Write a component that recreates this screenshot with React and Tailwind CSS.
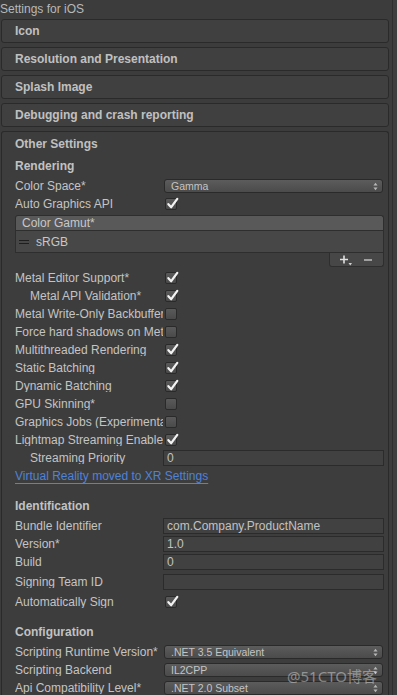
import React from "react";

const font = { fontFamily: '"Liberation Sans", Arial, sans-serif' };

function Check({ on }) {
  return (
    <div className="w-[12px] h-[12px] rounded-[2px] border border-[#2a2a2a] bg-gradient-to-b from-[#5a5a5a] to-[#4a4a4a] relative ml-[2px]">
      {on && (
        <svg viewBox="0 0 12 12" className="absolute left-[0px] top-[-2px] w-[13px] h-[13px]">
          <path d="M2.2 6.6 L4.8 9.4 L10.4 1.8" fill="none" stroke="#f2f2f2" strokeWidth="2.1" strokeLinecap="round" strokeLinejoin="round" />
        </svg>
      )}
    </div>
  );
}

function Drop({ value }) {
  return (
    <div className="ml-[1px] w-[219px] h-[14px] rounded-[3px] border border-[#2a2a2a] bg-gradient-to-b from-[#5c5c5c] to-[#4b4b4b] flex items-center justify-between pl-[6px] pr-[4px] text-[10.5px] text-[#c4c4c4] leading-none">
      <span>{value}</span>
      <svg viewBox="0 0 6 10" className="w-[5px] h-[9px]">
        <path d="M3 0.5 L5.5 3.8 L0.5 3.8 Z" fill="#b8b8b8" />
        <path d="M3 9.5 L5.5 6.2 L0.5 6.2 Z" fill="#b8b8b8" />
      </svg>
    </div>
  );
}

function Input({ value }) {
  return (
    <div className="w-[221px] h-[16px] border border-[#2b2b2b] bg-[#414141] flex items-center pl-[3px] text-[12px] text-[#c2c2c2] leading-none">
      {value}
    </div>
  );
}

function Row({ label, indent, children, className }) {
  return (
    <div className={"flex items-center h-[18px] " + (className || "")}>
      <div className={"w-[148px] shrink-0 overflow-hidden whitespace-nowrap text-[12px] text-[#c4c4c4] leading-none " + (indent ? "pl-[15px]" : "")}>
        {label}
      </div>
      <div className="flex items-center">{children}</div>
    </div>
  );
}

function Heading({ children, className }) {
  return (
    <div className={"h-[18px] flex items-center text-[12px] font-bold text-[#c2c2c2] leading-none " + (className || "")}>
      {children}
    </div>
  );
}

function FoldBox({ title }) {
  return (
    <div className="h-[24px] mb-[4px] border border-[#2a2a2a] rounded-[3px] bg-[#404040] flex items-center pl-[13px] text-[12px] font-bold text-[#c0c0c0] leading-none">
      {title}
    </div>
  );
}

export default function App() {
  return (
    <div className="w-[397px] h-[695px] overflow-hidden bg-[#3c3c3c] relative flex" style={font}>
      <div className="w-[389px] shrink-0 pl-[1px]">
        <div className="h-[18px] flex items-center pl-[0px] text-[12px] text-[#b8b8b8] leading-none -ml-[1px]">Settings for iOS</div>
        <div className="mt-[1px]">
          <FoldBox title="Icon" />
          <FoldBox title="Resolution and Presentation" />
          <FoldBox title="Splash Image" />
          <FoldBox title="Debugging and crash reporting" />
        </div>
        <div className="border border-[#2a2a2a] border-b-0 rounded-t-[3px] bg-[#3d3d3d] h-[600px]">
          <div className="h-[24px] flex items-center pl-[13px] text-[12px] font-bold text-[#c0c0c0] leading-none">Other Settings</div>
          <div className="pl-[13px] pr-[4px]">
            <Heading className="mt-[1px]">Rendering</Heading>
            <Row label="Color Space*" className="mt-[2px]"><Drop value="Gamma" /></Row>
            <Row label="Auto Graphics API"><Check on /></Row>
            <div className="mt-[2px] w-[369px]">
              <div className="h-[15px] bg-[#595959] border border-[#2e2e2e] border-b-0 rounded-t-[3px] flex items-center pl-[6px] text-[12px] text-[#c8c8c8] leading-none">Color Gamut*</div>
              <div className="h-[23px] bg-[#474747] border border-[#2e2e2e] flex items-center pl-[3px] text-[12px] text-[#c8c8c8] leading-none">
                <div className="w-[10px] flex flex-col gap-[2px] mr-[7px]">
                  <div className="h-[1px] bg-[#1e1e1e]" />
                  <div className="h-[1px] bg-[#1e1e1e]" />
                </div>
                sRGB
              </div>
              <div className="flex justify-end">
                <div className="w-[55px] h-[14px] bg-[#474747] border border-[#2e2e2e] border-t-0 rounded-b-[3px] flex items-center justify-around px-[4px] text-[#d8d8d8]">
                  <svg viewBox="0 0 14 12" className="w-[14px] h-[12px]">
                    <path d="M5 1.5 V9.5 M1 5.5 H9" stroke="#e0e0e0" strokeWidth="1.6" />
                    <path d="M9.5 9 L13 9 L11.25 11.5 Z" fill="#d0d0d0" />
                  </svg>
                  <svg viewBox="0 0 12 12" className="w-[12px] h-[12px]">
                    <path d="M2 6 H10" stroke="#c8c8c8" strokeWidth="1.4" />
                  </svg>
                </div>
              </div>
            </div>
            <Row label="Metal Editor Support*" className="mt-[2px]"><Check on /></Row>
            <Row label="Metal API Validation*" indent><Check on /></Row>
            <Row label="Metal Write-Only Backbuffer"><Check /></Row>
            <Row label="Force hard shadows on Metal"><Check /></Row>
            <Row label="Multithreaded Rendering"><Check on /></Row>
            <Row label="Static Batching"><Check on /></Row>
            <Row label="Dynamic Batching"><Check on /></Row>
            <Row label="GPU Skinning*"><Check /></Row>
            <Row label="Graphics Jobs (Experimental)"><Check /></Row>
            <Row label="Lightmap Streaming Enabled"><Check on /></Row>
            <Row label="Streaming Priority" indent><Input value="0" /></Row>
            <div className="h-[18px] flex items-center">
              <span className="text-[12px] text-[#4f82d8] leading-none underline underline-offset-[3px] decoration-[#4f82d8]">Virtual Reality moved to XR Settings</span>
            </div>
            <Heading className="mt-[12px]">Identification</Heading>
            <Row label="Bundle Identifier" className="mt-[2px]"><Input value="com.Company.ProductName" /></Row>
            <Row label="Version*"><Input value="1.0" /></Row>
            <Row label="Build"><Input value="0" /></Row>
            <Row label="Signing Team ID" className="mt-[2px]"><Input value="" /></Row>
            <Row label="Automatically Sign" className="mt-[2px]"><Check on /></Row>
            <Heading className="mt-[12px]">Configuration</Heading>
            <Row label="Scripting Runtime Version*" className="mt-[2px]"><Drop value=".NET 3.5 Equivalent" /></Row>
            <Row label="Scripting Backend"><Drop value="IL2CPP" /></Row>
            <Row label="Api Compatibility Level*"><Drop value=".NET 2.0 Subset" /></Row>
          </div>
        </div>
      </div>
      <div className="w-[3px] shrink-0" />
      <div className="w-[1px] shrink-0 bg-[#2e2e2e]" />
      <div className="flex-1 bg-[#3e3e3e]" />
      <div className="absolute left-[287px] top-[669px] text-[15px] leading-none text-[rgba(235,235,235,0.45)]" style={{ fontFamily: '"Noto Sans", "Noto Sans CJK SC", sans-serif' }}>
        @51CTO博客
      </div>
    </div>
  );
}
